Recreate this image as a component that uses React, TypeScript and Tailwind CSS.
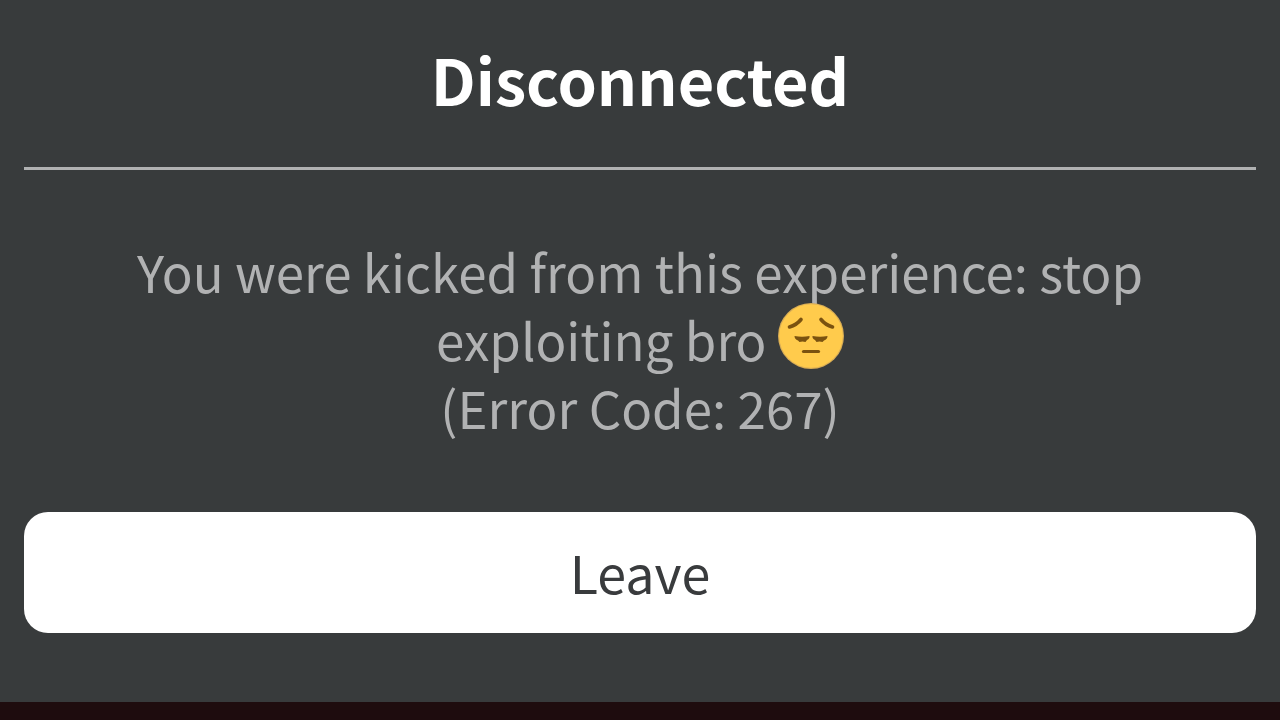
function PensiveFace() {
  return (
    <svg
      role="img"
      aria-label="pensive face"
      viewBox="0 0 66 66"
      className="inline-block w-[66px] h-[66px] -my-4 align-[8px]"
    >
      <circle cx="33" cy="33" r="33" fill="#d9ad55" />
      <circle cx="33" cy="33" r="31.8" fill="#ffcb4c" />
      <g fill="none" stroke="#7a5210" strokeLinecap="round">
        <path d="M11.500 24 Q18.500 22 23 16.500" strokeWidth="3.6" />
        <path d="M54.500 24 Q47.500 22 43 16.500" strokeWidth="3.6" />
        <path d="M25.500 48.500 H40.500" strokeWidth="3.2" />
      </g>
      <g fill="#7a5210">
        <path d="M16.500 33 Q24 34.500 31.500 33 Q32 35.500 29 37 L27.500 39 L24.500 38.500 L21.500 39 L20 37.500 Q16.500 36 16.500 33Z" />
        <path d="M34.500 33 Q42 34.500 49.500 33 Q49.500 36 46 37.500 L44.500 39 L41.500 38.500 L38.500 39 L37 37 Q34 35.500 34.500 33Z" />
      </g>
    </svg>
  );
}

export default function App() {
  return (
    <main className="min-h-screen flex flex-col bg-[#1e0c0e] font-['Noto_Sans_CJK_SC','Noto_Sans',sans-serif]">
      <section
        role="alertdialog"
        aria-labelledby="dialog-title"
        aria-describedby="dialog-message"
        className="flex-1 flex flex-col px-6 pt-[39px] mb-[18px] bg-[#383b3c]"
      >
        {/* Title */}
        <h1
          id="dialog-title"
          className="text-center text-[63px] leading-20 font-bold text-white"
        >
          Disconnected
        </h1>
        <hr className="mt-12 border-0 h-[3px] bg-[#b0b1b2]" />

        {/* Message */}
        <p
          id="dialog-message"
          className="mt-[67px] px-20 text-center text-[51px] leading-[68px] text-[#b1b2b3]"
        >
          You were kicked from this experience: stop exploiting bro{" "}
          <PensiveFace />
          <br />
          (Error Code: 267)
        </p>

        {/* Action */}
        <button
          type="button"
          className="mt-[71px] h-[121px] w-full pb-0.5 rounded-3xl bg-white text-[52px] text-[#393b3d] cursor-pointer"
        >
          Leave
        </button>
      </section>
    </main>
  );
}
